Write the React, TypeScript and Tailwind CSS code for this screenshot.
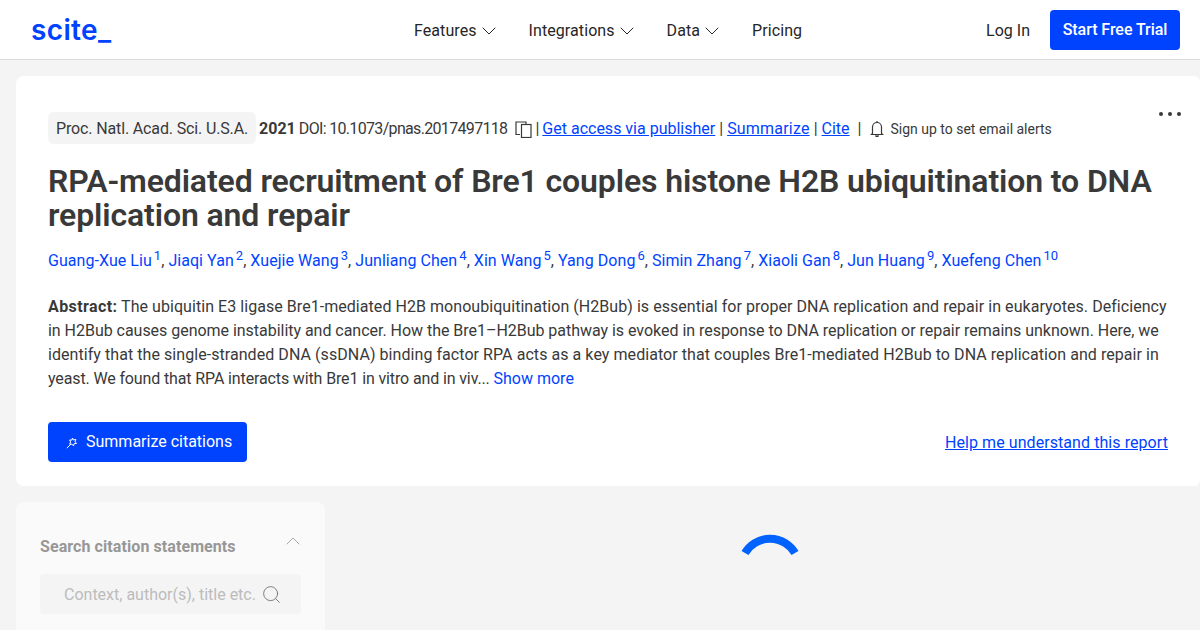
import React from 'react'
import { ChevronDown, ChevronUp, Search } from 'lucide-react'

const authors = [
  'Guang-Xue Liu',
  'Jiaqi Yan',
  'Xuejie Wang',
  'Junliang Chen',
  'Xin Wang',
  'Yang Dong',
  'Simin Zhang',
  'Xiaoli Gan',
  'Jun Huang',
  'Xuefeng Chen',
]

function NavItem({ label }: { label: string }) {
  return (
    <a className="flex items-center">
      {label}
      <ChevronDown size={24} strokeWidth={1} />
    </a>
  )
}

function CopyIcon() {
  return (
    <svg width="17" height="17" viewBox="0 0 17 17" fill="none" stroke="#393939" strokeWidth="1.2" className="ml-2">
      <path d="M5 13.5H1V1H11V3" />
      <rect x="6.5" y="3.5" width="9.5" height="13" />
    </svg>
  )
}

function BellIcon() {
  return (
    <svg width="14" height="18" viewBox="0 0 14 18" fill="none" stroke="#393939" strokeWidth="1.2" className="ml-[9px]">
      <path d="M2.5 13.5V7a4.5 4.5 0 0 1 9 0v6.5l1 1H1.5z" />
      <path d="M7 1v1.5M6 15v1.5h2V15" />
    </svg>
  )
}

function WandIcon() {
  return (
    <svg width="13" height="13" viewBox="0 0 13 13" fill="none" stroke="white" strokeWidth="1">
      <path d="M0.8 12.2L5 8" />
      <path d="M6.5 2l.8 2 2.6-.6-.9 2.4 1.6 1.6-2.5.3-.6 2.2-1.6-1.8-2.2.1.9-2.3-1-1.9 2.2.1z" />
    </svg>
  )
}

export default function App() {
  return (
    <div className="h-[630px] w-[1200px] overflow-hidden bg-[#f4f4f4] font-['Roboto',sans-serif] text-[16px] text-[#393939]">
      <header className="flex h-[60px] items-center border-b border-[#dcdcdc] bg-white pl-[31px] pr-5">
        <div className="w-[383px] font-['Inter',sans-serif] text-[28px] font-semibold leading-none tracking-[0.35px] text-[#0043ff]">scite_</div>
        <nav className="flex items-center gap-[28px] pt-[2px] tracking-[0.08px] text-[#262626]">
          <NavItem label="Features" />
          <NavItem label="Integrations" />
          <NavItem label="Data" />
          <a>Pricing</a>
        </nav>
        <div className="ml-auto flex items-center gap-5">
          <a className="pt-[2px] text-[#262626]">Log In</a>
          <button className="h-10 w-[130px] rounded bg-[#0043ff] pt-[1px] font-medium tracking-[-0.05px] text-white">Start Free Trial</button>
        </div>
      </header>

      <main className="px-4 pr-0 pt-4">
        <section className="relative rounded-l-lg rounded-r-md bg-white px-8 pb-6 pt-[36px]">
          <div className="flex h-8 items-center">
            <span className="flex h-8 items-center rounded-md bg-[#f4f4f4] px-2 pt-[1px] tracking-[-0.14px]">Proc. Natl. Acad. Sci. U.S.A.</span>
            <div className="flex items-center pt-[2px]">
              <b className="ml-[3px] font-bold">2021</b>
              <span className="ml-[3px] tracking-[-0.67px]">DOI: 10.1073/pnas.2017497118</span>
              <CopyIcon />
              <span className="ml-[3px]">|</span>
              <a className="ml-[3px] text-[#0043ff] underline">Get access via publisher</a>
              <span className="mx-[4px]">|</span>
              <a className="tracking-[0.2px] text-[#0043ff] underline">Summarize</a>
              <span className="mx-[4px]">|</span>
              <a className="text-[#0043ff] underline">Cite</a>
              <span className="ml-2">|</span>
              <BellIcon />
              <span className="ml-[6px] text-[14px]">Sign up to set email alerts</span>
            </div>
          </div>
          <div className="absolute right-[19px] top-[36px] flex gap-[5px]">
            <span className="h-1 w-1 rounded-full bg-[#393939]" />
            <span className="h-1 w-1 rounded-full bg-[#393939]" />
            <span className="h-1 w-1 rounded-full bg-[#393939]" />
          </div>

          <h1 className="mt-[20px] text-[32px] font-semibold leading-[34px] tracking-[-0.12px] text-[#393939]">
            RPA-mediated recruitment of Bre1 couples histone H2B ubiquitination to DNA replication and repair
          </h1>

          <div className="mt-[17px] flex h-6 items-center tracking-[0.05px] text-[#0043ff]">
            {authors.map((name, i) => (
              <span key={name} className="whitespace-pre">
                <a>{name}</a>
                <sup className="ml-[2px] text-[13px]">{i + 1}</sup>
                {i < authors.length - 1 && <span className="text-[#393939]">, </span>}
              </span>
            ))}
          </div>

          <div className="mt-[22px] whitespace-nowrap leading-6">
            <p className="tracking-[0.05px]">
              <b className="font-bold tracking-[0.4px]">Abstract:</b> The ubiquitin E3 ligase Bre1-mediated H2B monoubiquitination (H2Bub) is essential for proper DNA replication and repair in eukaryotes. Deficiency
            </p>
            <p className="tracking-[-0.03px]">
              in H2Bub causes genome instability and cancer. How the Bre1–H2Bub pathway is evoked in response to DNA replication or repair remains unknown. Here, we
            </p>
            <p className="tracking-[0.06px]">
              identify that the single-stranded DNA (ssDNA) binding factor RPA acts as a key mediator that couples Bre1-mediated H2Bub to DNA replication and repair in
            </p>
            <p className="tracking-[-0.13px]">
              yeast. We found that RPA interacts with Bre1 in vitro and in viv...{' '}
              <a className="tracking-normal text-[#0043ff]">Show more</a>
            </p>
          </div>

          <div className="mt-[31px] flex items-center justify-between">
            <button className="flex h-10 w-[199px] items-center gap-[7px] rounded bg-[#0043ff] pl-[18px] text-white">
              <WandIcon />
              Summarize citations
            </button>
            <a className="pt-[2px] tracking-[0.07px] text-[#0043ff] underline">Help me understand this report</a>
          </div>
        </section>

        <div className="mt-4 flex">
          <aside className="h-[200px] w-[309px] rounded-lg bg-[#fafafa] px-6 pt-[35px]">
            <div className="flex h-5 items-start justify-between">
              <span className="font-bold leading-5 tracking-[0.08px] text-[#979797]">Search citation statements</span>
              <ChevronUp size={24} strokeWidth={1} className="-mr-1 -mt-[8px] text-[#a8a8a8]" />
            </div>
            <div className="mt-[17px] flex h-10 items-center justify-between rounded bg-[#f4f4f4] pl-6 pr-[19px] text-[#bcbcbc]">
              <span className="pt-[1px]">Context, author(s), title etc.</span>
              <Search size={21} strokeWidth={1} className="text-[#6f6f6f]" />
            </div>
          </aside>
          <div className="flex flex-1 justify-center pl-[14px] pt-[28px]">
            <svg width="64" height="30" viewBox="0 0 64 30" fill="none">
              <path d="M7 23 A 29 29 0 0 1 57 23" stroke="#0062ff" strokeWidth="8" />
            </svg>
          </div>
        </div>
      </main>
    </div>
  )
}
